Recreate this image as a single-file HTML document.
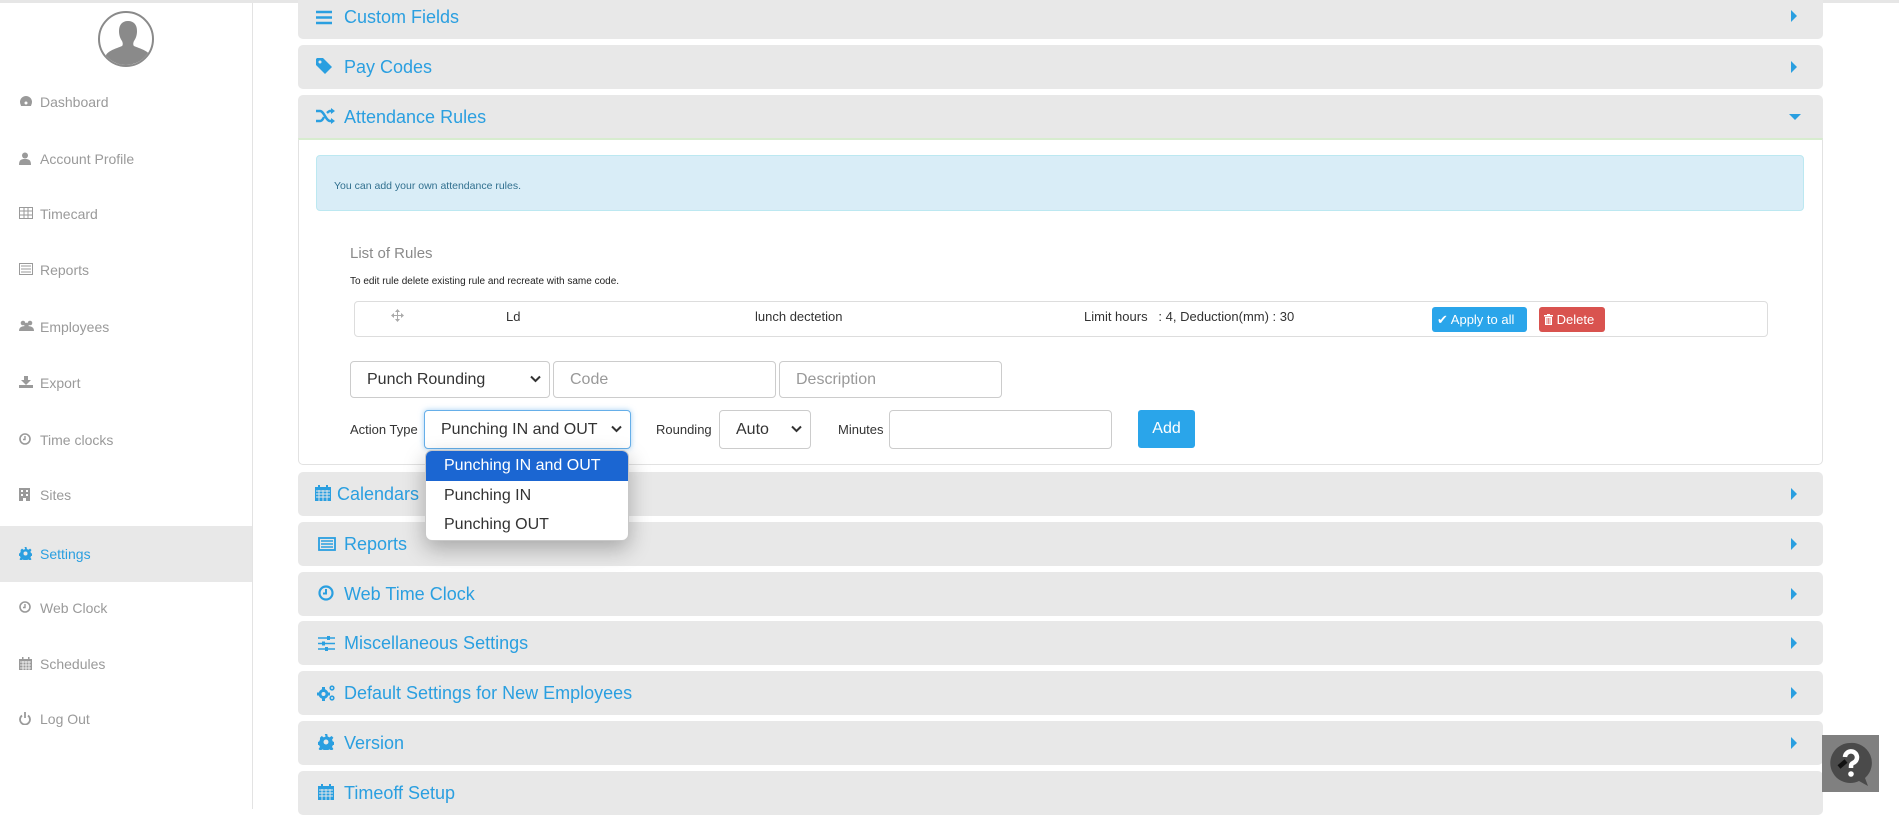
<!DOCTYPE html>
<html><head><meta charset="utf-8">
<style>
*{box-sizing:border-box;margin:0;padding:0}
body{width:1899px;height:809px;overflow:hidden;background:#fff;font-family:"Liberation Sans",Arial,sans-serif;position:relative}
.topline{position:absolute;left:0;top:0;width:1899px;height:3px;background:#e6e6e6}
.side{position:absolute;left:0;top:3px;width:253px;height:806px;border-right:1px solid #e3e3e3;background:#fff}
.avatar{position:absolute;left:98px;top:8px;width:56px;height:56px;border-radius:50%;border:2px solid #8a8a8a;overflow:hidden;background:#fff}
.nav{position:absolute;left:0;width:252px;height:56px;font-size:14px;color:#9a9a9a;line-height:56px;padding-left:40px}
.nav svg{position:absolute;left:19px;top:21px}
.nav.act{background:#e8e8e8;color:#2a9fe0}
.ph{position:absolute;left:298px;width:1525px;height:44px;background:#e8e8e8;border-radius:5px;color:#2a9fe0;font-size:18px;line-height:44px;padding-left:46px}
.ph svg.ic{position:absolute;left:18px;top:13px}
.car{position:absolute;right:26px;top:16px;width:0;height:0;border-top:6px solid transparent;border-bottom:6px solid transparent;border-left:6px solid #2a9fe0}
.body{position:absolute;left:298px;top:138px;width:1525px;height:327px;border:1px solid #e2e2e2;border-top:2px solid #d7eccf;border-radius:0 0 5px 5px;background:#fff}
.alert{position:absolute;left:316px;top:155px;width:1488px;height:56px;background:#d9edf7;border:1px solid #bce8f1;border-radius:4px;font-size:10.5px;color:#31708f;padding:24px 0 0 17px}
.t{position:absolute;white-space:nowrap}
.inp{position:absolute;border:1px solid #ccc;border-radius:4px;background:#fff;font-size:16px;color:#555;padding-left:16px}
.chev{position:absolute;right:8px;top:50%;margin-top:-5px}
</style></head><body>
<div class="topline"></div>
<div class="side">
 <div class="avatar"><svg width="56" height="56" viewBox="0 0 56 56"><path d="M28 8c-6 0-9 4-9 10 0 4 1 7 3 10 1 2 1 4 0 5-4 2-13 4-16 9-1 2-1 6-1 14h46c0-8 0-12-1-14-3-5-12-7-16-9-1-1-1-3 0-5 2-3 3-6 3-10 0-6-3-10-9-10z" fill="#8a8a8a"/></svg></div>
</div>
<div class="nav" style="top:74px"><svg width="14" height="12" viewBox="0 0 14 12"><path d="M7 1a6 6 0 0 0-6 6c0 2 1 3 1 4h10c0-1 1-2 1-4a6 6 0 0 0-6-6z" fill="#9a9a9a"/><circle cx="7" cy="8" r="1.5" fill="#fff"/></svg>Dashboard</div>
<div class="nav" style="top:131px"><svg width="12" height="13" viewBox="0 0 12 13"><circle cx="6" cy="3.5" r="3" fill="#9a9a9a"/><path d="M0 13c0-5 2-6 6-6s6 1 6 6z" fill="#9a9a9a"/></svg>Account Profile</div>
<div class="nav" style="top:186px"><svg width="14" height="12" viewBox="0 0 14 12"><rect x=".5" y=".5" width="13" height="11" fill="none" stroke="#9a9a9a"/><path d="M0 4h14M0 8h14M5 0v12M9 0v12" stroke="#9a9a9a"/></svg>Timecard</div>
<div class="nav" style="top:242px"><svg width="14" height="12" viewBox="0 0 14 12"><rect x=".5" y=".5" width="13" height="11" fill="none" stroke="#9a9a9a"/><path d="M2 3h10M2 6h10M2 9h10" stroke="#9a9a9a"/></svg>Reports</div>
<div class="nav" style="top:299px"><svg width="15" height="12" viewBox="0 0 15 12"><circle cx="4" cy="3" r="2.3" fill="#9a9a9a"/><circle cx="11" cy="3" r="2.3" fill="#9a9a9a"/><circle cx="7.5" cy="5" r="2.3" fill="#9a9a9a"/><path d="M0 11c0-4 3-5 7.5-5S15 7 15 11z" fill="#9a9a9a"/></svg>Employees</div>
<div class="nav" style="top:355px"><svg width="14" height="12" viewBox="0 0 14 12"><path d="M5 0h4v4h3L7 9 2 4h3zM0 9h14v3H0z" fill="#9a9a9a"/></svg>Export</div>
<div class="nav" style="top:412px"><svg width="12" height="12" viewBox="0 0 12 12"><circle cx="6" cy="6" r="5" fill="none" stroke="#9a9a9a" stroke-width="1.6"/><path d="M6 3v3.5H4" fill="none" stroke="#9a9a9a" stroke-width="1.4"/></svg>Time clocks</div>
<div class="nav" style="top:467px"><svg width="11" height="13" viewBox="0 0 11 13"><rect width="11" height="13" fill="#9a9a9a"/><path d="M2 2h2v2H2zM7 2h2v2H7zM2 6h2v2H2zM7 6h2v2H7zM4 10h3v3H4z" fill="#fff"/></svg>Sites</div>
<div class="nav act" style="top:526px"><svg width="13" height="13" viewBox="0 0 13 13"><path d="M5.5 0h2l.4 2 1.5.7 1.700-1.1 1.4 1.4-1.1 1.7.7 1.5 2 .4v2l-2 .4-.7 1.5 1.1 1.7-1.4 1.4-1.7-1.1-1.5.7-.4 2h-2l-.4-2-1.5-.7-1.7 1.1-1.4-1.4 1.1-1.7-.7-1.5-2-.4v-2l2-.4.7-1.5L1.6 3 3 1.6l1.7 1.1 1.5-.7z" fill="#2a9fe0"/><circle cx="6.5" cy="6.5" r="2" fill="#e8e8e8"/></svg>Settings</div>
<div class="nav" style="top:580px"><svg width="12" height="12" viewBox="0 0 12 12"><circle cx="6" cy="6" r="5" fill="none" stroke="#9a9a9a" stroke-width="1.6"/><path d="M6 3v3.5H4" fill="none" stroke="#9a9a9a" stroke-width="1.4"/></svg>Web Clock</div>
<div class="nav" style="top:636px"><svg width="13" height="13" viewBox="0 0 13 13"><rect y="2" width="13" height="11" fill="#9a9a9a"/><path d="M1 5h11M1 8h11M1 11h11M4 4v9M7 4v9M10 4v9" stroke="#fff" stroke-width=".8"/><rect x="3" width="1.5" height="3" fill="#9a9a9a"/><rect x="9" width="1.5" height="3" fill="#9a9a9a"/></svg>Schedules</div>
<div class="nav" style="top:691px"><svg width="12" height="13" viewBox="0 0 12 13"><path d="M3 3.5a5 5 0 1 0 6 0" fill="none" stroke="#9a9a9a" stroke-width="1.8"/><path d="M6 0v6" stroke="#9a9a9a" stroke-width="1.8"/></svg>Log Out</div>

<div class="ph" style="top:-5px"><svg class="ic" width="16" height="15" viewBox="0 0 16 15" style="top:15px"><path d="M0 2h16M0 7.5h16M0 13h16" stroke="#2a9fe0" stroke-width="2.6"/></svg>Custom Fields<div class="car" style="top:15px"></div></div>
<div class="ph" style="top:45px"><svg class="ic" width="17" height="17" viewBox="0 0 17 17"><path d="M0 1v6l9 9 7-7-9-9H1z" fill="#2a9fe0"/><circle cx="4" cy="4" r="1.5" fill="#e8e8e8"/></svg>Pay Codes<div class="car"></div></div>
<div class="ph" style="top:95px;border-radius:5px 5px 0 0"><svg class="ic" width="19" height="16" viewBox="0 0 19 16"><path d="M0 3h4c4 0 6 10 10 10h2M0 13h4c2 0 3-2 4-4M11 5c1-1 2-2 3-2h2" fill="none" stroke="#2a9fe0" stroke-width="2.4"/><path d="M15 0l4 3-4 3zM15 10l4 3-4 3z" fill="#2a9fe0"/></svg>Attendance Rules<div style="position:absolute;right:22px;top:19px;border-left:6px solid transparent;border-right:6px solid transparent;border-top:6px solid #2a9fe0"></div></div>
<div class="body"></div>
<div class="alert">You can add your own attendance rules.</div>
<div class="t" style="left:350px;top:245px;font-size:15px;color:#8a8a8a">List of Rules</div>
<div class="t" style="left:350px;top:276px;font-size:10px;color:#222">To edit rule delete existing rule and recreate with same code.</div>
<div style="position:absolute;left:354px;top:301px;width:1414px;height:36px;border:1px solid #ddd;border-radius:4px"></div>
<svg style="position:absolute;left:391px;top:309px" width="13" height="13" viewBox="0 0 13 13"><path d="M6.5 0l2.5 3H4zM6.5 13L4 10h5zM0 6.5L3 4v5zM13 6.5L10 9V4z M6 2h1v9H6zM2 6h9v1H2z" fill="#aaa"/></svg>
<div class="t" style="left:506px;top:309px;font-size:13px;color:#333">Ld</div>
<div class="t" style="left:755px;top:309px;font-size:13px;color:#333">lunch dectetion</div>
<div class="t" style="left:1084px;top:309px;font-size:13px;color:#333">Limit hours &nbsp; : 4, Deduction(mm) : 30</div>
<div class="t" style="left:1432px;top:307px;width:95px;height:25px;background:#2aa5ea;border-radius:3px;color:#fff;font-size:13px;line-height:25px;padding-left:5px">✔ Apply to all</div>
<div class="t" style="left:1539px;top:307px;width:66px;height:25px;background:#d9534f;border-radius:3px;color:#fff;font-size:13px;line-height:25px;padding-left:5px"><svg width="9" height="11" viewBox="0 0 9 11" style="vertical-align:-1px"><path d="M0 1h9v1.5H0zM3 0h3v1H3zM1 3h7v8H1z" fill="#fff"/><path d="M3 4v6M4.5 4v6M6 4v6" stroke="#d9534f" stroke-width=".7"/></svg> Delete</div>

<div class="inp" style="left:350px;top:361px;width:200px;height:37px;line-height:35px;color:#333">Punch Rounding<svg class="chev" width="11" height="8" viewBox="0 0 11 8"><path d="M1 1.5l4.5 4.5L10 1.5" fill="none" stroke="#333" stroke-width="2"/></svg></div>
<div class="inp" style="left:553px;top:361px;width:223px;height:37px;line-height:35px;color:#999">Code</div>
<div class="inp" style="left:779px;top:361px;width:223px;height:37px;line-height:35px;color:#999">Description</div>

<div class="t" style="left:350px;top:422px;font-size:13px;color:#333">Action Type</div>
<div class="inp" style="left:424px;top:410px;width:207px;height:39px;line-height:37px;color:#333;border:1px solid #66afe9;box-shadow:0 0 6px rgba(102,175,233,.6)">Punching IN and OUT<svg class="chev" width="11" height="8" viewBox="0 0 11 8"><path d="M1 1.5l4.5 4.5L10 1.5" fill="none" stroke="#333" stroke-width="2"/></svg></div>
<div class="t" style="left:656px;top:422px;font-size:13px;color:#333">Rounding</div>
<div class="inp" style="left:719px;top:410px;width:92px;height:39px;line-height:37px;color:#333">Auto<svg class="chev" width="11" height="8" viewBox="0 0 11 8"><path d="M1 1.5l4.5 4.5L10 1.5" fill="none" stroke="#333" stroke-width="2"/></svg></div>
<div class="t" style="left:838px;top:422px;font-size:13px;color:#333">Minutes</div>
<div class="inp" style="left:889px;top:410px;width:223px;height:39px"></div>
<div class="t" style="left:1138px;top:410px;width:57px;height:38px;background:#2aa5ea;border-radius:3px;color:#fff;font-size:16px;line-height:38px;text-align:center">Add</div>

<div class="ph" style="top:472px"><svg class="ic" width="16" height="16" viewBox="0 0 16 16" style="left:17px"><rect y="2" width="16" height="14" fill="#2a9fe0"/><path d="M1 6h14M1 9h14M1 12h14M4 5v11M8 5v11M12 5v11" stroke="#e8e8e8" stroke-width=".9"/><rect x="3" width="2" height="4" fill="#2a9fe0"/><rect x="11" width="2" height="4" fill="#2a9fe0"/></svg><span style="margin-left:-7px">Calendars</span><div class="car"></div></div>
<div class="ph" style="top:522px"><svg class="ic" width="18" height="14" viewBox="0 0 18 14" style="left:20px;top:15px"><rect x="1" y="1" width="16" height="12" fill="none" stroke="#2a9fe0" stroke-width="1.8"/><path d="M3 4h12M3 7h12M3 10h12" stroke="#2a9fe0" stroke-width="1.5"/></svg>Reports<div class="car"></div></div>
<div class="ph" style="top:572px"><svg class="ic" width="16" height="16" viewBox="0 0 16 16" style="left:20px"><circle cx="8" cy="8" r="6.5" fill="none" stroke="#2a9fe0" stroke-width="2.2"/><path d="M8 4v4.5H5" fill="none" stroke="#2a9fe0" stroke-width="2"/></svg>Web Time Clock<div class="car"></div></div>
<div class="ph" style="top:621px"><svg class="ic" width="17" height="15" viewBox="0 0 17 15" style="left:20px;top:15px"><path d="M0 2h17M0 7.5h17M0 13h17" stroke="#2a9fe0" stroke-width="1.6"/><rect x="9" y="0" width="3" height="4" fill="#2a9fe0"/><rect x="4" y="5.5" width="3" height="4" fill="#2a9fe0"/><rect x="7" y="11" width="3" height="4" fill="#2a9fe0"/></svg>Miscellaneous Settings<div class="car"></div></div>
<div class="ph" style="top:671px"><svg class="ic" width="19" height="18" viewBox="0 0 19 18" style="left:19px"><circle cx="6.5" cy="10" r="5" fill="#2a9fe0"/><circle cx="6.5" cy="10" r="2" fill="#e8e8e8"/><path d="M5 3h3v3H5zM5 14h3v3H5zM0 8.5h3v3H0zM10 8.5h3v3h-3z" fill="#2a9fe0"/><circle cx="15" cy="4" r="2.6" fill="#2a9fe0"/><circle cx="15" cy="14" r="2.6" fill="#2a9fe0"/><circle cx="15" cy="4" r="1" fill="#e8e8e8"/><circle cx="15" cy="14" r="1" fill="#e8e8e8"/></svg>Default Settings for New Employees<div class="car"></div></div>
<div class="ph" style="top:721px"><svg class="ic" width="16" height="16" viewBox="0 0 13 13" style="left:20px"><path d="M5.5 0h2l.4 2 1.5.7 1.7-1.1 1.4 1.4-1.1 1.7.7 1.5 2 .4v2l-2 .4-.7 1.5 1.1 1.7-1.4 1.4-1.7-1.1-1.5.7-.4 2h-2l-.4-2-1.5-.7-1.7 1.1-1.4-1.4 1.1-1.7-.7-1.5-2-.4v-2l2-.4.7-1.5L1.6 3 3 1.6l1.7 1.1 1.5-.7z" fill="#2a9fe0"/><circle cx="6.5" cy="6.5" r="2" fill="#e8e8e8"/></svg>Version<div class="car"></div></div>
<div class="ph" style="top:771px"><svg class="ic" width="16" height="16" viewBox="0 0 16 16" style="left:20px"><rect y="2" width="16" height="14" fill="#2a9fe0"/><path d="M1 6h14M1 9h14M1 12h14M4 5v11M8 5v11M12 5v11" stroke="#e8e8e8" stroke-width=".9"/><rect x="3" width="2" height="4" fill="#2a9fe0"/><rect x="11" width="2" height="4" fill="#2a9fe0"/></svg>Timeoff Setup</div>

<div style="position:absolute;left:425px;top:450px;width:204px;height:91px;background:#fff;border:1px solid #c8c8c8;border-radius:7px;box-shadow:0 8px 22px rgba(0,0,0,.28);overflow:hidden;font-size:16px;color:#333">
 <div style="height:30px;line-height:30px;background:#1b66d2;color:#fff;padding-left:18px">Punching IN and OUT</div>
 <div style="height:30px;line-height:30px;padding-left:18px">Punching IN</div>
 <div style="height:30px;line-height:28px;padding-left:18px">Punching OUT</div>
</div>

<div style="position:absolute;left:1822px;top:735px;width:57px;height:57px;background:#808080">
<svg width="57" height="57" viewBox="0 0 57 57"><path d="M28 8a20 20 0 1 0 9 38l9 5-3-8A20 20 0 0 0 28 8z" fill="#4a4a4a"/><path d="M23 22a6 6 0 1 1 8 6c-2 1-2 2-2 5" fill="none" stroke="#fff" stroke-width="4.5"/><circle cx="29" cy="39" r="2.8" fill="#fff"/><path d="M17 32l7-6" stroke="#111" stroke-width="4.5"/></svg>
</div>
</body></html>
